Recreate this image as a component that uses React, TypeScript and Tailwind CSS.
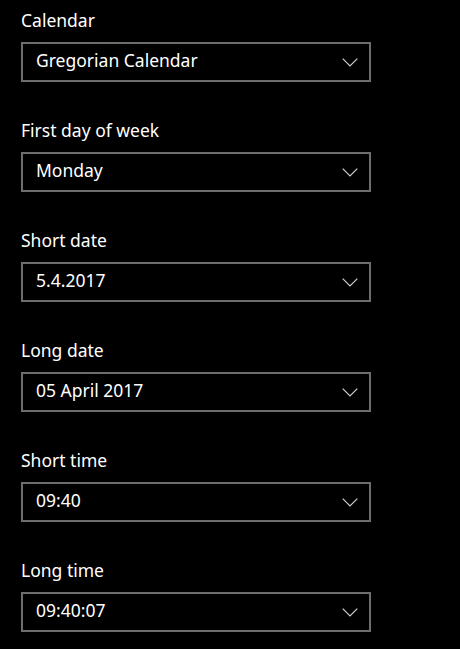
const campos = [
  { rotulo: "Calendar", valor: "Gregorian Calendar" },
  { rotulo: "First day of week", valor: "Monday" },
  { rotulo: "Short date", valor: "5.4.2017" },
  { rotulo: "Long date", valor: "05 April 2017" },
  { rotulo: "Short time", valor: "09:40" },
  { rotulo: "Long time", valor: "09:40:07" },
];

function Seta() {
  return (
    <svg width="16" height="9" viewBox="0 0 16 9" fill="none" className="shrink-0">
      <path d="M0.7 0.7 L8 8 L15.3 0.7" stroke="#d0d0d0" strokeWidth="1.2" />
    </svg>
  );
}

export default function App() {
  return (
    <div
      className="w-[460px] h-[649px] bg-black text-white pl-[21px] pt-[9px] overflow-hidden"
      style={{ fontFamily: '"Noto Sans", "Open Sans", sans-serif' }}
    >
      {campos.map((c) => (
        <div key={c.rotulo} className="mb-[37px]">
          <div className="h-[22px] leading-[22px] text-[17.5px]">{c.rotulo}</div>
          <div className="mt-[11px] w-[350px] h-[40px] border-2 border-[#6e6e6e] flex items-center justify-between pl-[13px] pr-[11px]">
            <span className="text-[17.5px] leading-none pb-[3px]">{c.valor}</span>
            <Seta />
          </div>
        </div>
      ))}
    </div>
  );
}
